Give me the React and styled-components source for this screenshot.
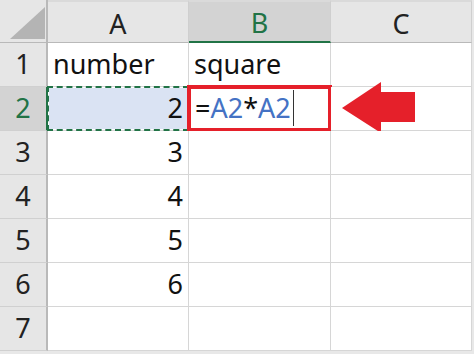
import React from "react";
import styled, { createGlobalStyle } from "styled-components";

const Global = createGlobalStyle`
  html, body { margin: 0; padding: 0; background: #fff; }
  body { font-family: "Noto Sans", "Open Sans", sans-serif; }
`;

const Sheet = styled.div`
  display: grid;
  grid-template-columns: 48px 141px 142px 141px 2px;
  grid-template-rows: 43px repeat(7, 44px) 2px;
  width: 474px;
  height: 354px;
  background: #e8e8e8;
  overflow: hidden;
`;

const Corner = styled.div`
  background: #e6e6e6;
  border-right: 2px solid #b9b9b9;
  border-bottom: 1px solid #b9b9b9;
  box-sizing: border-box;
  display: flex;
  align-items: flex-end;
  justify-content: flex-end;
  padding: 0 1px 3px 0;
`;

const ColHead = styled.div`
  box-sizing: border-box;
  background: ${(p) => (p.$active ? "#d3d3d3" : "#e6e6e6")};
  color: ${(p) => (p.$active ? "#217346" : "#222")};
  border-bottom: ${(p) => (p.$active ? "2px solid #217346" : "1px solid #b9b9b9")};
  border-right: 1px solid #cfcfcf;
  border-top: 2px solid #dadada;
  display: flex;
  align-items: center;
  justify-content: center;
  font-size: 27px;
  padding-top: 2px;
`;

const RowHead = styled.div`
  box-sizing: border-box;
  background: ${(p) => (p.$active ? "#d3d3d3" : "#e6e6e6")};
  color: ${(p) => (p.$active ? "#217346" : "#222")};
  border-right: 2px solid ${(p) => (p.$active ? "#217346" : "#b9b9b9")};
  border-bottom: 1px solid #d0d0d0;
  display: flex;
  align-items: flex-end;
  justify-content: center;
  font-size: 27px;
  line-height: 1;
  padding-bottom: 9px;
`;

const Cell = styled.div`
  position: relative;
  box-sizing: border-box;
  background: #fff;
  border-right: 1px solid #d6d6d6;
  border-bottom: 1px solid #d6d6d6;
  display: flex;
  align-items: flex-end;
  justify-content: ${(p) => (p.$num ? "flex-end" : "flex-start")};
  padding: 0 5px 9px 5px;
  font-size: 27px;
  line-height: 1;
  color: #111;
  white-space: nowrap;
`;

const Edge = styled.div`
  background: #e8e8e8;
`;

const Selection = styled.div`
  position: absolute;
  left: -1px;
  top: -1px;
  right: -1px;
  bottom: -1px;
  border: 2px dashed #217346;
  background: #dae3f3;
  background-clip: padding-box;
  box-sizing: border-box;
`;

const Value = styled.span`
  position: relative;
`;

const RedBox = styled.div`
  position: absolute;
  left: -2px;
  top: -2px;
  right: -2px;
  bottom: -2px;
  border: 4px solid #e5202a;
  box-sizing: border-box;
`;

const Formula = styled.span`
  position: relative;
  display: flex;
  align-items: flex-end;
  padding-left: 1px;
`;

const Ref = styled.span`
  color: #4472c4;
`;

const Caret = styled.span`
  display: inline-block;
  width: 1px;
  height: 36px;
  background: #333;
  margin-left: 2px;
  margin-bottom: -5px;
`;

const ArrowSvg = styled.svg`
  position: absolute;
  left: 11px;
  top: -5px;
`;

const Arrow = () => (
  <ArrowSvg width="74" height="52" viewBox="0 0 74 52">
    <polygon points="0,26 39,0 39,10 73,10 73,40 39,40 39,51" fill="#e5202a" />
  </ArrowSvg>
);

const CornerTri = () => (
  <svg width="35" height="32" viewBox="0 0 35 32">
    <polygon points="35,0 35,32 0,32" fill="#b4b4b4" />
  </svg>
);

const rows = [
  ["number", "square"],
  ["2", null],
  ["3", ""],
  ["4", ""],
  ["5", ""],
  ["6", ""],
  ["", ""],
];

export default function App() {
  return (
    <>
      <Global />
      <Sheet>
        <Corner>
          <CornerTri />
        </Corner>
        <ColHead>A</ColHead>
        <ColHead $active>B</ColHead>
        <ColHead>C</ColHead>
        <Edge />
        {rows.map((r, i) => {
          const n = i + 1;
          const active = n === 2;
          return (
            <React.Fragment key={n}>
              <RowHead $active={active}>{n}</RowHead>
              <Cell $num={i > 0}>
                {active && <Selection />}
                <Value>{r[0]}</Value>
              </Cell>
              <Cell>
                {active ? (
                  <>
                    <RedBox />
                    <Formula>
                      =<Ref>A2</Ref>*<Ref>A2</Ref>
                      <Caret />
                    </Formula>
                  </>
                ) : (
                  r[1]
                )}
              </Cell>
              <Cell>{active && <Arrow />}</Cell>
              <Edge />
            </React.Fragment>
          );
        })}
        <Edge />
        <Edge />
        <Edge />
        <Edge />
        <Edge />
      </Sheet>
    </>
  );
}
